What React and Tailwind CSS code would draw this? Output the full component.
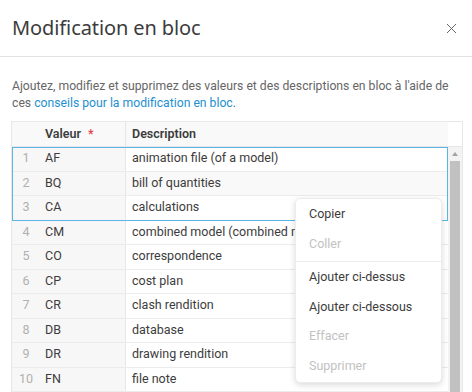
import { X } from "lucide-react";

const rows = [
  ["1", "AF", "animation file (of a model)"],
  ["2", "BQ", "bill of quantities"],
  ["3", "CA", "calculations"],
  ["4", "CM", "combined model (combined model)"],
  ["5", "CO", "correspondence"],
  ["6", "CP", "cost plan"],
  ["7", "CR", "clash rendition"],
  ["8", "DB", "database"],
  ["9", "DR", "drawing rendition"],
  ["10", "FN", "file note"],
];

const menu = [
  { label: "Copier" },
  { label: "Coller", disabled: true },
  { divider: true },
  { label: "Ajouter ci-dessus" },
  { label: "Ajouter ci-dessous" },
  { label: "Effacer", disabled: true },
  { label: "Supprimer", disabled: true },
];

function Row({ n, code, desc, shaded }) {
  return (
    <div className="flex h-[24.5px] border-b border-[#ececec]">
      <div className="w-[114px] flex items-center bg-[#f7f7f7] border-r border-[#e6e6e6]">
        <span className="w-[28px] text-center text-[#b0b0b0]">{n}</span>
        <span className="pl-[5px] text-[#3c3c3c]">{code}</span>
      </div>
      <div
        className={`flex-1 flex items-center pl-[6px] text-[#3c3c3c] whitespace-nowrap overflow-hidden ${
          shaded ? "bg-[#f9f9f9]" : "bg-white"
        }`}
      >
        {desc}
      </div>
    </div>
  );
}

export default function App() {
  return (
    <div
      className="relative w-[472px] h-[392px] overflow-hidden bg-white text-[12.5px]"
      style={{ fontFamily: "Roboto, 'Noto Sans', sans-serif" }}
    >
      {/* Header */}
      <div className="h-[57px] flex items-center justify-between pl-[12px] pr-[12px] border-b border-[#e2e2e2]">
        <h2
          className="text-[20px] text-[#3c3c3c] tracking-[-0.1px]"
          style={{ fontFamily: "'Noto Sans', sans-serif" }}
        >
          Modification en bloc
        </h2>
        <X size={17} strokeWidth={1.4} className="text-[#666]" />
      </div>

      {/* Intro */}
      <p className="px-[12px] pt-[21px] leading-[17px] text-[12.2px] text-[#666]">
        Ajoutez, modifiez et supprimez des valeurs et des descriptions en bloc à l'aide de
        ces{" "}
        <span className="text-[#1e8fd0]">conseils pour la modification en bloc</span>.
      </p>

      {/* Table */}
      <div className="mt-[9px] ml-[11px] w-[452px] border border-[#e8e8e8] border-b-0">
        <div className="flex h-[25px] border-b border-[#e6e6e6]">
          <div className="flex-1 flex bg-[#f9f9f9]">
            <div className="w-[114px] flex items-center border-r border-[#e6e6e6] font-semibold text-[#3c3c3c]">
              <span className="w-[28px]" />
              <span className="pl-[5px]">Valeur</span>
              <span className="ml-[7px] text-[#e0434b]">*</span>
            </div>
            <div className="flex-1 flex items-center pl-[6px] font-semibold text-[#3c3c3c]">
              Description
            </div>
          </div>
          <div className="w-[14px] bg-white" />
        </div>

        <div className="flex">
          <div className="flex-1 min-w-0">
            <div className="relative">
              {rows.slice(0, 3).map((r, i) => (
                <Row key={r[0]} n={r[0]} code={r[1]} desc={r[2]} shaded={i === 1} />
              ))}
              <div className="absolute inset-0 border border-[#5ab6e4] pointer-events-none" />
            </div>
            {rows.slice(3).map((r) => (
              <Row key={r[0]} n={r[0]} code={r[1]} desc={r[2]} />
            ))}
          </div>
          <div className="w-[14px] flex flex-col items-center bg-[#f3f3f3] pt-[4px] px-[2px]">
            <svg width="8" height="6" viewBox="0 0 8 6" className="mb-[4px]">
              <path d="M4 1 L7 5 L1 5 Z" fill="#a3a3a3" />
            </svg>
            <div className="w-full flex-1 bg-[#c1c1c1]" />
          </div>
        </div>
      </div>

      {/* Context menu */}
      <div className="absolute left-[295px] top-[198px] w-[147px] bg-white rounded-[5px] border border-[#ececec] shadow-[0_2px_6px_rgba(0,0,0,0.15)] pt-[1px] pb-[1px]">
        {menu.map((m, i) =>
          m.divider ? (
            <div key={i} className="my-[1.5px] h-px bg-[#ececec]" />
          ) : (
            <div
              key={i}
              className={`h-[29.5px] flex items-center pl-[13px] ${
                m.disabled ? "text-[#c2c2c2]" : "text-[#3c3c3c]"
              }`}
            >
              {m.label}
            </div>
          )
        )}
      </div>
    </div>
  );
}
